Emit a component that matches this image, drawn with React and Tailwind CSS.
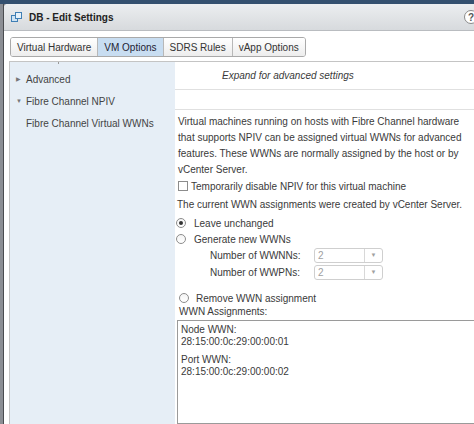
import React from 'react';

const tabs = ['Virtual Hardware', 'VM Options', 'SDRS Rules', 'vApp Options'];

const Radio = ({ checked }) => (
  <span className="w-[10px] h-[10px] rounded-full border border-[#8c8c8c] bg-gradient-to-b from-[#f4f4f4] to-white flex items-center justify-center shrink-0">
    {checked && <span className="w-[4px] h-[4px] rounded-full bg-[#333]" />}
  </span>
);

const Select = () => (
  <div className="w-[69px] h-[15px] border border-[#cfcfcf] rounded-[3px] flex items-center text-[#a0a0a0] bg-white">
    <span className="flex-1 pl-[3px]">2</span>
    <span className="w-[18px] h-full border-l border-[#d8d8d8] flex items-center justify-center text-[6px]">▼</span>
  </div>
);

const App = () => {
  return (
    <div className="w-[474px] h-[424px] overflow-hidden bg-[#8b8e94] flex flex-col font-['Liberation_Sans',Arial,sans-serif] text-[10px] text-[#3a3a3a]">
      <div className="h-[4px] bg-[#34506f] shrink-0" />
      <div className="flex-1 flex min-h-0">
        <div className="w-[4px] bg-[#8b8e94] border-r border-[#4a4c50] shrink-0" />
        <div className="flex-1 bg-white rounded-tl-[4px] flex flex-col min-h-0">
          {/* title bar */}
          <div className="h-[27px] shrink-0 bg-gradient-to-b from-[#eceef0] to-[#d7dadd] border-b border-[#b9bcc0] rounded-tl-[4px] flex items-center pl-[7px] pr-[2px]">
            <svg width="11" height="11" viewBox="0 0 11 11" className="shrink-0">
              <rect x="0.5" y="3.5" width="6" height="6" fill="#cfe3f3" stroke="#3f7fb5" />
              <rect x="4.5" y="0.5" width="6" height="6" fill="#e6f1fa" stroke="#3f7fb5" />
            </svg>
            <span className="ml-[7px] font-bold text-[10px] text-[#222]">DB - Edit Settings</span>
            <span className="ml-auto w-[14px] h-[14px] rounded-full border border-[#8a8a8a] bg-white text-[10px] font-bold text-[#555] flex items-center justify-center translate-x-[6px]">?</span>
          </div>
          {/* tabs */}
          <div className="pl-[6px] pt-[6px] flex shrink-0">
            <div className="flex h-[20px] border border-[#a9a9a9] rounded-[3px] overflow-hidden text-[10px]">
              {tabs.map((t, i) => (
                <div
                  key={t}
                  className={
                    'flex items-center px-[6px] ' +
                    (i > 0 ? 'border-l border-[#b8b8b8] ' : '') +
                    (t === 'VM Options'
                      ? 'bg-[#c8ddf1] text-[#223]'
                      : 'bg-gradient-to-b from-white to-[#ededed] text-[#333]')
                  }
                >
                  {t}
                </div>
              ))}
            </div>
          </div>
          {/* content */}
          <div className="mt-[4px] ml-[5px] flex-1 flex border-t border-l border-[#c4c4c4] min-h-0">
            <div className="w-[165px] bg-[#e6eef6] shrink-0 flex flex-col text-[10px] text-[#444]">
              <div className="h-[6px] relative">
                <span className="absolute left-[48px] top-0 w-[1px] h-[2px] bg-[#999]" />
              </div>
              <div className="h-[22px] flex items-center pl-[6px]">
                <span className="text-[6px] text-[#777] w-[10px]">▶</span>
                <span>Advanced</span>
              </div>
              <div className="h-[22px] flex items-center pl-[6px]">
                <span className="text-[6px] text-[#777] w-[10px]">▼</span>
                <span>Fibre Channel NPIV</span>
              </div>
              <div className="h-[22px] flex items-center pl-[16px]">Fibre Channel Virtual WWNs</div>
            </div>
            <div className="flex-1 flex flex-col min-w-0">
              <div className="h-[28px] border-b border-[#e0e0e0] flex items-center pl-[47px] italic">
                Expand for advanced settings
              </div>
              <div className="h-[20px] border-b border-[#e0e0e0]" />
              <div className="pl-[3px] pt-[4px] leading-[16px] text-[10px]">
                Virtual machines running on hosts with Fibre Channel hardware that supports NPIV can be assigned virtual WWNs for advanced features. These WWNs are normally assigned by the host or by vCenter Server.
              </div>
              <div className="pl-[3px] mt-[1px] h-[14px] flex items-center gap-[3px]">
                <span className="w-[10px] h-[10px] border border-[#8c8c8c] bg-white shrink-0" />
                <span>Temporarily disable NPIV for this virtual machine</span>
              </div>
              <div className="pl-[2px] mt-[4px] h-[14px] flex items-center">
                The current WWN assignments were created by vCenter Server.
              </div>
              <div className="pl-[1px] mt-[5px] h-[14px] flex items-center gap-[8px]">
                <Radio checked />
                <span>Leave unchanged</span>
              </div>
              <div className="pl-[1px] mt-[2px] h-[14px] flex items-center gap-[8px]">
                <Radio />
                <span>Generate new WWNs</span>
              </div>
              <div className="pl-[35px] mt-[1px] h-[17px] flex items-center">
                <span className="w-[104px]">Number of WWNNs:</span>
                <Select />
              </div>
              <div className="pl-[35px] h-[17px] flex items-center">
                <span className="w-[104px]">Number of WWPNs:</span>
                <Select />
              </div>
              <div className="pl-[4px] mt-[10px] h-[14px] flex items-center gap-[7px]">
                <Radio />
                <span>Remove WWN assignment</span>
              </div>
              <div className="pl-[4px] h-[12px] flex items-center">WWN Assignments:</div>
              <div className="ml-[2px] mt-[3px] flex-1 border border-[#9a9a9a] border-r-0 pl-[3px] pt-[3px] leading-[12px]">
                <div>Node WWN:</div>
                <div>28:15:00:0c:29:00:00:01</div>
                <div className="mt-[6px]">Port WWN:</div>
                <div>28:15:00:0c:29:00:00:02</div>
              </div>
            </div>
          </div>
        </div>
      </div>
    </div>
  );
};

export default App;
